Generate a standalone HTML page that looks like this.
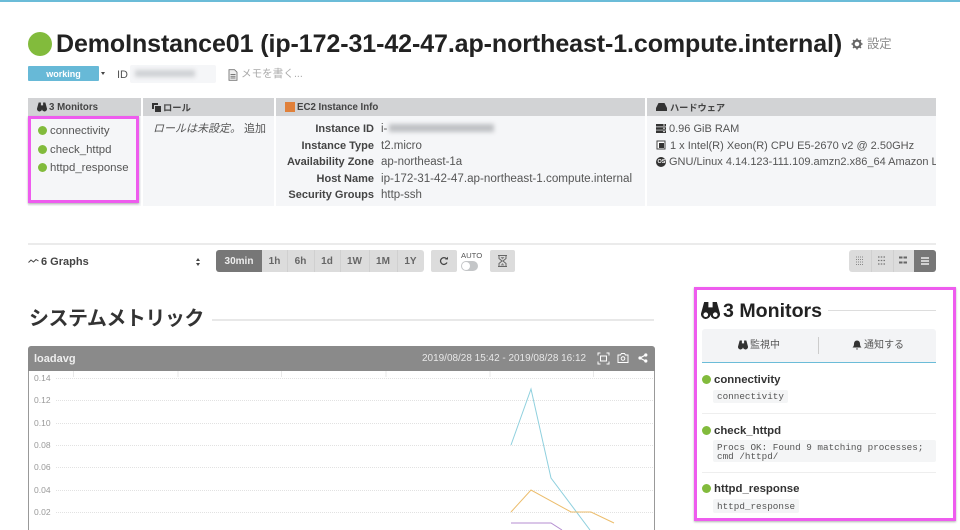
<!DOCTYPE html>
<html lang="ja"><head><meta charset="utf-8"><title>DemoInstance01</title>
<style>
html,body{margin:0;padding:0;background:#fff}
#p{position:relative;width:960px;height:530px;overflow:hidden;background:#fff;font-family:"Liberation Sans","Noto Sans CJK JP",sans-serif;color:#4a4a4a;filter:blur(.35px)}
#p div,#p span.a,#p svg.a{position:absolute}
.t{white-space:nowrap;line-height:16px}
.b{font-weight:700}
.hd{background:#d2d3d5;top:98px;height:18px}
.bd{background:#f5f6f8;top:116px;height:90px}
.ht{top:99.5px;font-size:9.7px;font-weight:700;color:#444}
.lab{font-size:11px;font-weight:700;color:#444;text-align:right;width:130px;left:244px}
.val{font-size:11.5px;color:#555;left:381px}
.hw{font-size:11px;color:#555;left:669px}
.dot{border-radius:50%;background:#82bb3c}
.btn{top:250px;height:22px;background:#dcdcdc;font-size:10px;font-weight:700;color:#666;text-align:center;line-height:23px;white-space:nowrap}
.sep{top:250px;width:1px;height:22px;background:#d0d0d0}
.yl{font-size:8.5px;color:#999;left:34px;line-height:10px}
.code{background:#f4f5f6;border-radius:2px;font-family:"Liberation Mono",monospace;font-size:9.3px;color:#555;line-height:9px;white-space:pre}
.mn{font-size:11.4px;font-weight:700;color:#333;left:714px}
.li{left:50px;font-size:11.4px;color:#555}
</style></head><body><div id="p">
<div style="left:0;top:0;width:960px;height:2px;background:#6bbcd8"></div>

<div class="dot" style="left:28px;top:32px;width:24px;height:24px"></div>
<div class="t b" style="left:56px;top:29px;font-size:25px;line-height:30px;color:#222;letter-spacing:-.09px">DemoInstance01 (ip-172-31-42-47.ap-northeast-1.compute.internal)</div>
<svg class="a" style="left:851px;top:38px" width="12" height="12" viewBox="0 0 12 12"><circle cx="6" cy="6" r="3.4" fill="none" stroke="#666" stroke-width="2.2"/><path d="M6 .5v2M6 9.500v2M.5 6h2M9.500 6h2M2.100 2.100l1.400 1.400M8.500 8.500l1.400 1.400M2.100 9.900l1.400-1.400M8.500 3.500l1.400-1.400" stroke="#666" stroke-width="1.6"/></svg>
<div class="t" style="left:867px;top:36px;font-size:12.3px;color:#888">設定</div>

<div style="left:28px;top:66px;width:71px;height:15px;background:#67b9d7;border-radius:1px;color:#fff;font-size:9px;font-weight:700;text-align:center;line-height:16px">working</div>
<div style="left:101px;top:72px;width:0;height:0;border-left:2.5px solid transparent;border-right:2.5px solid transparent;border-top:3px solid #444"></div>
<div class="t" style="left:117px;top:66.5px;font-size:11px;color:#555">ID</div>
<div style="left:130px;top:65px;width:86px;height:18px;background:#f5f6f8;border-radius:2px"></div>
<div style="left:135px;top:70px;width:60px;height:7px;background:#cfd1d4;filter:blur(2px)"></div>
<svg class="a" style="left:228px;top:69px" width="10" height="12" viewBox="0 0 10 12"><path d="M1 .7h5.500L9 3.200V11.300H1zM2.500 5.500h5M2.500 7.300h5M2.500 9h5" fill="#eee" stroke="#777" stroke-width=".9"/></svg>
<div class="t" style="left:241px;top:66px;font-size:10.6px;color:#aaa">メモを書く...</div>

<div class="hd" style="left:28px;width:113px"></div><div class="bd" style="left:28px;width:113px"></div>
<div class="hd" style="left:143px;width:131px"></div><div class="bd" style="left:143px;width:131px"></div>
<div class="hd" style="left:276px;width:369px"></div><div class="bd" style="left:276px;width:369px"></div>
<div class="hd" style="left:647px;width:289px"></div><div class="bd" style="left:647px;width:289px"></div>

<svg class="a" style="left:37px;top:102px" width="10" height="10" viewBox="0 0 18 18"><path d="M3 1h4v5h4V1h4l3 11a4.500 4.500 0 1 1-9 1 4.500 4.500 0 1 1-9-1z" fill="#333"/></svg>
<div class="t ht" style="left:49px">3 Monitors</div>
<svg class="a" style="left:152px;top:103px" width="9" height="9" viewBox="0 0 9 9"><path d="M0 0h6v2H2v4H0z" fill="#333"/><path d="M3 3h6v6H3z" fill="#333"/></svg>
<div class="t ht" style="left:163px;font-size:9.3px">ロール</div>
<div style="left:285px;top:102px;width:10px;height:10px;background:#e0803a"></div>
<div class="t ht" style="left:297px">EC2 Instance Info</div>
<svg class="a" style="left:656px;top:103px" width="11" height="8" viewBox="0 0 11 8"><path d="M2.500 0h6L11 5v3H0V5z" fill="#333"/></svg>
<div class="t ht" style="left:670px;font-size:9.2px">ハードウェア</div>

<div style="left:28px;top:116px;width:105px;height:81px;border:3px solid #ee5cee;box-shadow:0 1px 2px rgba(0,0,0,.3)"></div>
<div class="dot" style="left:38px;top:126px;width:9px;height:9px"></div>
<div class="t li" style="top:123px">connectivity</div>
<div class="dot" style="left:38px;top:145px;width:9px;height:9px"></div>
<div class="t li" style="top:142px">check_httpd</div>
<div class="dot" style="left:38px;top:163px;width:9px;height:9px"></div>
<div class="t li" style="top:160px">httpd_response</div>

<div class="t" style="left:153px;top:121px;font-size:11px;color:#555"><i>ロールは未設定。</i> 追加</div>

<div class="t lab" style="top:121px">Instance ID</div>
<div class="t lab" style="top:138px">Instance Type</div>
<div class="t lab" style="top:154px">Availability Zone</div>
<div class="t lab" style="top:171px">Host Name</div>
<div class="t lab" style="top:187px">Security Groups</div>
<div class="t val" style="top:121px">i-</div>
<div style="left:389px;top:124px;width:105px;height:8px;background:#bfc1c4;filter:blur(2px)"></div>
<div class="t val" style="top:138px">t2.micro</div>
<div class="t val" style="top:154px">ap-northeast-1a</div>
<div class="t val" style="top:171px;font-size:11.65px">ip-172-31-42-47.ap-northeast-1.compute.internal</div>
<div class="t val" style="top:187px">http-ssh</div>

<svg class="a" style="left:656px;top:124px" width="10" height="9" viewBox="0 0 10 9"><path d="M0 0h10v2.500H0zM0 3.200h10v2.500H0zM0 6.400h10V9H0z" fill="#333"/><path d="M7 1h2M7 4.300h2M7 7.600h2" stroke="#ddd"/></svg>
<div class="t hw" style="top:121px">0.96 GiB RAM</div>
<svg class="a" style="left:656px;top:140px" width="10" height="10" viewBox="0 0 10 10"><rect x="1" y="1" width="8" height="8" fill="#fff" stroke="#444"/><rect x="3" y="3" width="5" height="5" fill="#333"/></svg>
<div class="t hw" style="left:670px;top:138px">1 x Intel(R) Xeon(R) CPU E5-2670 v2 @ 2.50GHz</div>
<div class="dot" style="left:656px;top:157px;width:10px;height:10px;background:#333"></div>
<div class="t" style="left:657.5px;top:157px;font-size:5.5px;line-height:10px;color:#fff;font-weight:700">OS</div>
<div style="left:669px;top:150px;width:267px;height:26px;overflow:hidden"><div class="t" style="left:0;top:4px;font-size:11px;color:#555">GNU/Linux 4.14.123-111.109.amzn2.x86_64 Amazon Linux</div></div>

<div style="left:28px;top:243px;width:908px;height:2px;background:#ebebeb"></div>
<svg class="a" style="left:28px;top:258px" width="11" height="6" viewBox="0 0 11 6"><path d="M.5 4.500L3 2l2.500 2L8 1.500 10.500 3" fill="none" stroke="#444"/></svg>
<div class="t b" style="left:41px;top:254px;font-size:11px;color:#444">6 Graphs</div>
<div style="left:195.5px;top:258px;width:0;height:0;border-left:2.5px solid transparent;border-right:2.5px solid transparent;border-bottom:3px solid #444"></div>
<div style="left:195.5px;top:262.5px;width:0;height:0;border-left:2.5px solid transparent;border-right:2.5px solid transparent;border-top:3px solid #444"></div>

<div class="btn" style="left:216px;width:46px;background:#777;color:#eee;border-radius:3px 0 0 3px">30min</div>
<div class="btn" style="left:262px;width:25px">1h</div>
<div class="btn" style="left:287px;width:27px">6h</div>
<div class="btn" style="left:314px;width:26px">1d</div>
<div class="btn" style="left:340px;width:29px">1W</div>
<div class="btn" style="left:369px;width:28px">1M</div>
<div class="btn" style="left:397px;width:27px;border-radius:0 3px 3px 0">1Y</div>
<div class="sep" style="left:287px"></div><div class="sep" style="left:314px"></div><div class="sep" style="left:340px"></div><div class="sep" style="left:369px"></div><div class="sep" style="left:397px"></div>
<div class="btn" style="left:431px;width:26px;border-radius:2px"></div>
<svg class="a" style="left:439px;top:256px" width="10" height="10" viewBox="0 0 10 10"><path d="M8 6.500A3.400 3.400 0 1 1 7.500 2.800" fill="none" stroke="#444" stroke-width="1.3"/><path d="M6 3.500h3V.8z" fill="#444"/></svg>
<div class="t" style="left:461px;top:248px;font-size:7.7px;color:#555">AUTO</div>
<div style="left:461px;top:261px;width:17px;height:10px;background:#c4c6c8;border-radius:5px"></div>
<div style="left:462px;top:262px;width:8px;height:8px;background:#fff;border-radius:50%"></div>
<div class="btn" style="left:490px;width:25px;border-radius:2px"></div>
<svg class="a" style="left:497px;top:255px" width="11" height="12" viewBox="0 0 11 12"><path d="M1 .5h9M1 11.500h9M2 .5v3l3 2.500-3 2.500v3M9 .5v3L6 6l3 2.500v3" fill="none" stroke="#666"/><path d="M3.500 2h4L5.500 4.500zM3.500 10.500L5.500 8l2 2.500z" fill="#888"/></svg>

<div class="btn" style="left:849px;width:22px;border-radius:3px 0 0 3px"></div>
<div class="btn" style="left:871px;width:22px"></div>
<div class="btn" style="left:893px;width:21px"></div>
<div class="btn" style="left:914px;width:22px;background:#777;border-radius:0 3px 3px 0"></div>
<div class="sep" style="left:871px"></div><div class="sep" style="left:893px"></div>
<svg class="a" style="left:856px;top:256px" width="9" height="9" viewBox="0 0 9 9"><path d="M0 1h8M0 3.500h8M0 6h8M0 8.500h8" stroke="#888" stroke-dasharray="1 1"/></svg>
<svg class="a" style="left:878px;top:256px" width="9" height="9" viewBox="0 0 9 9"><path d="M0 1h8M0 4.500h8M0 8h8" stroke="#777" stroke-width="1.3" stroke-dasharray="1.500 1.250"/></svg>
<svg class="a" style="left:899px;top:256px" width="9" height="9" viewBox="0 0 9 9"><path d="M0 1.500h8M0 6.500h8" stroke="#666" stroke-width="2" stroke-dasharray="3.500 1"/></svg>
<svg class="a" style="left:920px;top:256px" width="10" height="10" viewBox="0 0 10 10"><path d="M1 2h8M1 5h8M1 8h8" stroke="#eee" stroke-width="1.5"/></svg>

<div class="t" style="left:29px;top:306px;font-size:20px;line-height:26px;font-weight:700;color:#333;letter-spacing:-.5px">システムメトリック</div>
<div style="left:212px;top:319px;width:442px;height:2px;background:#e8e8e8"></div>

<div style="left:28px;top:346px;width:627px;height:25px;background:#8a8a8a;border-radius:3px 3px 0 0"></div>
<div class="t b" style="left:34px;top:351px;font-size:11px;color:#eee">loadavg</div>
<div class="t" style="left:422px;top:351px;font-size:9.97px;color:#e8e8e8">2019/08/28 15:42 - 2019/08/28 16:12</div>
<svg class="a" style="left:597px;top:352px" width="13" height="13" viewBox="0 0 13 13"><path d="M1 3.500V1h2.500M9.500 1H12v2.500M12 9.500V12H9.500M3.500 12H1V9.500" fill="none" stroke="#fff"/><rect x="3.500" y="4" width="6" height="5" fill="none" stroke="#fff"/></svg>
<svg class="a" style="left:617px;top:352px" width="12" height="12" viewBox="0 0 12 12"><path d="M1 3h2.500l1-1.500h3L8.500 3H11v7.500H1z" fill="none" stroke="#fff"/><circle cx="6" cy="6.500" r="1.800" fill="none" stroke="#fff"/></svg>
<svg class="a" style="left:638px;top:353px" width="10" height="10" viewBox="0 0 10 10"><path d="M7.500 2L2 5l5.500 3" fill="none" stroke="#fff" stroke-width="1.2"/><circle cx="7.800" cy="2" r="1.600" fill="#fff"/><circle cx="2" cy="5" r="1.600" fill="#fff"/><circle cx="7.800" cy="8" r="1.600" fill="#fff"/></svg>

<div style="left:28px;top:371px;width:1px;height:159px;background:#999"></div>
<div style="left:654px;top:371px;width:1px;height:159px;background:#999"></div>
<svg class="a" style="left:0;top:0" width="960" height="530" viewBox="0 0 960 530">
<g stroke="#e2e2e2" fill="none" stroke-dasharray="1 1">
<path d="M56 378.500H654M56 400.500H654M56 423.500H654M56 445.500H654M56 467.500H654M56 490.500H654M56 512.500H654"/></g>
<path d="M73.500 371v6M178 371v6M281.500 371v6M386 371v6M490 371v6M593.500 371v6" stroke="#e8e8e8"/>
<path d="M511 445L531 389 551 478 590 530" fill="none" stroke="#8fd0de" stroke-width="1"/>
<path d="M511 512L531 490 571 512 591 512 614 523" fill="none" stroke="#ecbd6c" stroke-width="1"/>
<path d="M511 523L551 523 562 530" fill="none" stroke="#b48ed0" stroke-width="1"/>
</svg>
<div class="t yl" style="top:373px">0.14</div>
<div class="t yl" style="top:395px">0.12</div>
<div class="t yl" style="top:418px">0.10</div>
<div class="t yl" style="top:440px">0.08</div>
<div class="t yl" style="top:462px">0.06</div>
<div class="t yl" style="top:485px">0.04</div>
<div class="t yl" style="top:507px">0.02</div>

<div style="left:694px;top:287px;width:256px;height:228px;border:3px solid #ee5cee;box-shadow:0 1px 2px rgba(0,0,0,.3)"></div>
<svg class="a" style="left:701px;top:301px" width="19" height="19" viewBox="0 0 18 18"><path d="M3 1h4v5h4V1h4l3 11a4.500 4.500 0 1 1-9 1 4.500 4.500 0 1 1-9-1z" fill="#222"/><circle cx="4.500" cy="13" r="2.200" fill="#fff"/><circle cx="13.500" cy="13" r="2.200" fill="#fff"/></svg>
<div class="t b" style="left:723px;top:299px;font-size:19.6px;line-height:24px;color:#222">3 Monitors</div>
<div style="left:828px;top:310px;width:108px;height:1px;background:#ddd"></div>

<div style="left:702px;top:329px;width:234px;height:33px;background:#f3f4f6;border-radius:3px 3px 0 0"></div>
<div style="left:702px;top:362px;width:234px;height:1px;background:#6bbcd8"></div>
<div style="left:818px;top:337px;width:1px;height:17px;background:#ccc"></div>
<svg class="a" style="left:738px;top:340px" width="10" height="10" viewBox="0 0 18 18"><path d="M3 1h4v5h4V1h4l3 11a4.500 4.500 0 1 1-9 1 4.500 4.500 0 1 1-9-1z" fill="#333"/></svg>
<div class="t" style="left:750px;top:338px;font-size:10px;color:#555">監視中</div>
<svg class="a" style="left:852px;top:340px" width="10" height="10" viewBox="0 0 10 10"><path d="M5 .5C7 .5 8 2 8 4c0 2 1 3 1.500 3.500H.5C1 7 2 6 2 4 2 2 3 .5 5 .5zM4 8.500h2L5 10z" fill="#333"/></svg>
<div class="t" style="left:864px;top:338px;font-size:10px;color:#555">通知する</div>

<div class="dot" style="left:702px;top:375px;width:9px;height:9px"></div>
<div class="t mn" style="top:372px">connectivity</div>
<div class="code" style="left:713px;top:390px;width:71px;height:13px;padding-left:4px;line-height:14px">connectivity</div>
<div style="left:702px;top:413px;width:234px;height:1px;background:#eee"></div>

<div class="dot" style="left:702px;top:426px;width:9px;height:9px"></div>
<div class="t mn" style="top:423px">check_httpd</div>
<div class="code" style="left:713px;top:440px;width:219px;height:19px;padding:3px 0 0 4px">Procs OK: Found 9 matching processes;
cmd /httpd/</div>
<div style="left:702px;top:472px;width:234px;height:1px;background:#eee"></div>

<div class="dot" style="left:702px;top:484px;width:9px;height:9px"></div>
<div class="t mn" style="top:481px">httpd_response</div>
<div class="code" style="left:713px;top:499px;width:82px;height:14px;padding-left:4px;line-height:15px">httpd_response</div>
</div></body></html>
